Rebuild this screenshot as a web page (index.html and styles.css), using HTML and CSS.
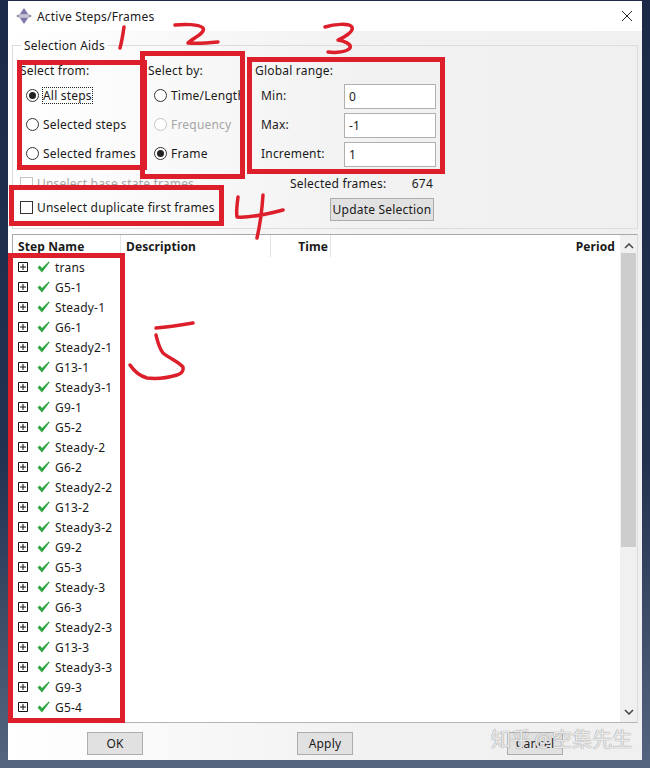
FILE: index.html
```html
<!DOCTYPE html>
<html lang="en">
<head>
    <meta charset="UTF-8">
    <title>Active Steps/Frames</title>
    <link rel="stylesheet" href="styles.css">
</head>
<body>
    <svg class="defs" width="0" height="0">
        <symbol id="plus-box" viewBox="0 0 10 10">
            <path d="M.5.5h9v9H.5z" fill="#fff" stroke="#111"/>
            <path d="M2 5h6M5 2v6" stroke="#111" fill="none"/>
        </symbol>
        <symbol id="tick" viewBox="0 0 13 12">
            <path d="M.5 6.500 2.700 4.500 5 7 11.800.5 12.700 1.300 5 11.500z" fill="#2fa544"/>
        </symbol>
    </svg>

    <div class="dialog">
        <div class="titlebar">
            <svg class="app-icon" width="16" height="16" viewBox="0 0 16 16">
                <path d="M8 0 12.500 6.500h-9z" fill="#7f78a8"/>
                <path d="M8 16 3.500 9.500h9z" fill="#7f78a8"/>
                <path d="M0 8 3.500 6v4zM16 8l-3.500-2v4z" fill="#8f8f98"/>
                <path d="M3.500 7h9v2h-9z" fill="#c3c0d2"/>
            </svg>
            <span class="title">Active Steps/Frames</span>
            <svg class="close" width="12" height="12" viewBox="0 0 12 12">
                <path d="M1 1l10 10M11 1 1 11" stroke="#222" fill="none"/>
            </svg>
        </div>

        <div class="content">
            <fieldset class="aids">
                <legend>Selection Aids</legend>
                <div class="aids-cols">
                    <div class="col col-from">
                        <div class="col-title">Select from:</div>
                        <label class="radio-row"><span class="radio on"></span><span class="focus">All steps</span></label>
                        <label class="radio-row"><span class="radio"></span>Selected steps</label>
                        <label class="radio-row"><span class="radio"></span>Selected frames</label>
                    </div>
                    <div class="col col-by">
                        <div class="col-title">Select by:</div>
                        <label class="radio-row"><span class="radio"></span>Time/Length</label>
                        <label class="radio-row disabled"><span class="radio"></span>Frequency</label>
                        <label class="radio-row"><span class="radio on"></span>Frame</label>
                    </div>
                    <div class="col col-range">
                        <div class="col-title">Global range:</div>
                        <div class="range-row"><span>Min:</span><div class="field">0</div></div>
                        <div class="range-row"><span>Max:</span><div class="field">-1</div></div>
                        <div class="range-row"><span>Increment:</span><div class="field">1</div></div>
                    </div>
                </div>
                <div class="aids-bottom">
                    <div class="checks">
                        <label class="check-row disabled"><span class="check"></span>Unselect base state frames</label>
                        <label class="check-row"><span class="check"></span>Unselect duplicate first frames</label>
                    </div>
                    <div class="selected">
                        <div class="selected-count"><span>Selected frames:</span><span>674</span></div>
                        <button class="btn btn-update">Update Selection</button>
                    </div>
                </div>
            </fieldset>

            <div class="steps">
                <div class="steps-head">
                    <div class="th th-name">Step Name</div>
                    <div class="th th-desc">Description</div>
                    <div class="th th-time">Time</div>
                    <div class="th th-period">Period</div>
                </div>
                <ul class="step-list">
                    <li><svg class="plus"><use href="#plus-box"/></svg><svg class="tick"><use href="#tick"/></svg>trans</li>
                    <li><svg class="plus"><use href="#plus-box"/></svg><svg class="tick"><use href="#tick"/></svg>G5-1</li>
                    <li><svg class="plus"><use href="#plus-box"/></svg><svg class="tick"><use href="#tick"/></svg>Steady-1</li>
                    <li><svg class="plus"><use href="#plus-box"/></svg><svg class="tick"><use href="#tick"/></svg>G6-1</li>
                    <li><svg class="plus"><use href="#plus-box"/></svg><svg class="tick"><use href="#tick"/></svg>Steady2-1</li>
                    <li><svg class="plus"><use href="#plus-box"/></svg><svg class="tick"><use href="#tick"/></svg>G13-1</li>
                    <li><svg class="plus"><use href="#plus-box"/></svg><svg class="tick"><use href="#tick"/></svg>Steady3-1</li>
                    <li><svg class="plus"><use href="#plus-box"/></svg><svg class="tick"><use href="#tick"/></svg>G9-1</li>
                    <li><svg class="plus"><use href="#plus-box"/></svg><svg class="tick"><use href="#tick"/></svg>G5-2</li>
                    <li><svg class="plus"><use href="#plus-box"/></svg><svg class="tick"><use href="#tick"/></svg>Steady-2</li>
                    <li><svg class="plus"><use href="#plus-box"/></svg><svg class="tick"><use href="#tick"/></svg>G6-2</li>
                    <li><svg class="plus"><use href="#plus-box"/></svg><svg class="tick"><use href="#tick"/></svg>Steady2-2</li>
                    <li><svg class="plus"><use href="#plus-box"/></svg><svg class="tick"><use href="#tick"/></svg>G13-2</li>
                    <li><svg class="plus"><use href="#plus-box"/></svg><svg class="tick"><use href="#tick"/></svg>Steady3-2</li>
                    <li><svg class="plus"><use href="#plus-box"/></svg><svg class="tick"><use href="#tick"/></svg>G9-2</li>
                    <li><svg class="plus"><use href="#plus-box"/></svg><svg class="tick"><use href="#tick"/></svg>G5-3</li>
                    <li><svg class="plus"><use href="#plus-box"/></svg><svg class="tick"><use href="#tick"/></svg>Steady-3</li>
                    <li><svg class="plus"><use href="#plus-box"/></svg><svg class="tick"><use href="#tick"/></svg>G6-3</li>
                    <li><svg class="plus"><use href="#plus-box"/></svg><svg class="tick"><use href="#tick"/></svg>Steady2-3</li>
                    <li><svg class="plus"><use href="#plus-box"/></svg><svg class="tick"><use href="#tick"/></svg>G13-3</li>
                    <li><svg class="plus"><use href="#plus-box"/></svg><svg class="tick"><use href="#tick"/></svg>Steady3-3</li>
                    <li><svg class="plus"><use href="#plus-box"/></svg><svg class="tick"><use href="#tick"/></svg>G9-3</li>
                    <li><svg class="plus"><use href="#plus-box"/></svg><svg class="tick"><use href="#tick"/></svg>G5-4</li>
                </ul>
                <div class="scrollbar">
                    <svg class="arrow" width="10" height="6" viewBox="0 0 10 6"><path d="M1 5l4-4 4 4" fill="none" stroke="#444" stroke-width="1.500"/></svg>
                    <div class="scroll-track"><div class="scroll-thumb"></div></div>
                    <svg class="arrow" width="10" height="6" viewBox="0 0 10 6"><path d="M1 1l4 4 4-4" fill="none" stroke="#444" stroke-width="1.500"/></svg>
                </div>
            </div>

            <div class="actions">
                <button class="btn">OK</button>
                <button class="btn">Apply</button>
                <button class="btn">Cancel</button>
            </div>
        </div>
    </div>

    <!-- red markup drawn over the screenshot -->
    <div class="mark mark-1"></div>
    <div class="mark mark-2"></div>
    <div class="mark mark-3"></div>
    <div class="mark mark-4"></div>
    <div class="mark mark-5"></div>
    <svg class="scribbles" width="650" height="768" viewBox="0 0 650 768">
        <g fill="none" stroke="#dc1f2b" stroke-width="3.500" stroke-linecap="round" stroke-linejoin="round">
            <path d="M124 27c-1 7-2 14-4 21"/>
            <path d="M175 25c9-1 24-1 28 3 3 5-10 10-15 15 10 1 20 0 30-1"/>
            <path d="M325 27c9-3 24-4 27 0 2 5-8 10-14 13 6 1 14 4 12 8-3 4-14 5-22 4"/>
            <path d="M238 197c-1 8-2 15-1 20 14 1 31-3 46-7M263 195c-1 15-3 30-6 43"/>
            <path d="M156 328c12-1 25-3 37-5M156 335c2 8 3 13 7 18 6 5 16 9 20 14 1 4-2 7-6 8-10 3-22 4-30 3-7-2-13-7-17-13"/>
        </g>
    </svg>

    <div class="watermark">知乎 @空集先生</div>
</body>
</html>
```

FILE: styles.css
```css
* {
    box-sizing: border-box;
}
body {
    margin: 0;
    width: 650px;
    height: 768px;
    overflow: hidden;
    position: relative;
    padding: 1px 8px 8px;
    background: linear-gradient(#1b2a46 0%, #22324f 60%, #56657f 100%);
    font-family: "Noto Sans", "Noto Sans CJK SC", sans-serif;
    font-size: 12px;
    letter-spacing: 0.2px;
    color: #1a1a1a;
}
.defs {
    position: absolute;
}
.dialog {
    height: 759px;
    display: flex;
    flex-direction: column;
    background: linear-gradient(90deg, #fff 0%, #f2f2f2 55%, #f0f0f0 100%);
}
.titlebar {
    height: 30px;
    flex: none;
    display: flex;
    align-items: center;
    background-color: #fff;
    padding: 0 9px 0 8px;
}
.title {
    margin-left: 5px;
    flex: 1;
}
.content {
    flex: 1;
    display: flex;
    flex-direction: column;
    padding: 0 4px;
}
.aids {
    margin: 4px 0 0;
    padding: 0 0 0 7px;
    height: 194px;
    border: 1px solid #dcdcdc;
    min-width: 0;
}
.aids legend {
    padding: 0 3px;
    margin-left: 1px;
    line-height: 21px;
}
.aids-cols {
    display: flex;
    margin-top: 4px;
}
.col-title {
    line-height: 18px;
    height: 21px;
    padding-top: 2px;
}
.col-from {
    width: 128px;
}
.col-by {
    width: 107px;
}
.col-range {
    width: 190px;
}
.radio-row {
    display: flex;
    align-items: center;
    height: 29px;
    padding-left: 6px;
}
.radio {
    width: 13px;
    height: 13px;
    border: 1px solid #333;
    border-radius: 50%;
    background-color: #fff;
    margin-right: 4px;
    flex: none;
    display: flex;
    align-items: center;
    justify-content: center;
}
.radio.on::after {
    content: "";
    width: 7px;
    height: 7px;
    border-radius: 50%;
    background-color: #222;
}
.focus {
    outline: 1px dotted #222;
    line-height: 15px;
}
.disabled {
    color: #a6a6a6;
}
.disabled .radio, .disabled .check {
    border-color: #c4c4c4;
}
.range-row {
    display: flex;
    align-items: center;
    height: 29px;
    padding-left: 6px;
}
.range-row span {
    width: 83px;
}
.field {
    width: 92px;
    height: 25px;
    margin-top: 2px;
    line-height: 23px;
    padding-left: 4px;
    background-color: #fff;
    border: 1px solid #b0b0b0;
}
.aids-bottom {
    display: flex;
    margin-top: 7px;
}
.checks {
    width: 274px;
    margin-left: -4px;
}
.check-row {
    display: flex;
    align-items: center;
    height: 25px;
    margin-top: 4px;
    padding-left: 4px;
}
.check-row.disabled {
    height: 16px;
    margin-top: 0;
    overflow: hidden;
}
.check {
    width: 13px;
    height: 13px;
    background-color: #fff;
    border: 1px solid #333;
    margin-right: 4px;
    flex: none;
}
.check-row.disabled .check {
    background: none;
}
.selected {
    width: 143px;
}
.selected-count {
    display: flex;
    justify-content: space-between;
    line-height: 18px;
}
.btn-update {
    display: block;
    margin: 5px 0 0 40px;
    width: 104px;
    height: 23px;
}
.btn {
    font-family: inherit;
    font-size: 12px;
    letter-spacing: inherit;
    color: #1a1a1a;
    background-color: #e1e1e1;
    border: 1px solid #adadad;
    padding: 0;
}
.steps {
    margin-top: 5px;
    height: 489px;
    display: grid;
    grid-template-columns: 1fr 17px;
    grid-template-rows: 22px 1fr;
    background-color: #fff;
    border: 1px solid #a9a9a9;
    border-right-color: #dcdcdc;
    border-bottom-color: #b5b5b5;
}
.steps-head {
    display: flex;
    font-weight: bold;
    letter-spacing: 0.1px;
    line-height: 23px;
}
.th {
    border-right: 1px solid #e3e3e3;
    padding: 0 5px;
}
.th-name {
    width: 108px;
}
.th-desc {
    width: 150px;
}
.th-time {
    width: 60px;
    text-align: right;
    padding-right: 2px;
}
.th-period {
    flex: 1;
    text-align: right;
    border-right: 0;
    padding-right: 5px;
}
.step-list {
    grid-column: 1;
    grid-row: 2;
    list-style: none;
    margin: 0;
    padding: 0 0 0 5px;
}
.step-list li {
    display: flex;
    align-items: center;
    height: 20px;
}
.plus {
    width: 10px;
    height: 10px;
    margin-top: -1px;
}
.tick {
    width: 13px;
    height: 12px;
    margin: 0 5px 0 9px;
}
.scrollbar {
    grid-column: 2;
    grid-row: 1 / 3;
    background-color: #f0f0f0;
    display: flex;
    flex-direction: column;
    align-items: center;
    padding: 8px 0 7px;
}
.arrow {
    flex: none;
}
.scroll-track {
    flex: 1;
    width: 100%;
    padding: 2px 1px 0;
    margin: 2px 0 6px;
}
.scroll-thumb {
    height: 294px;
    background-color: #cdcdcd;
}
.actions {
    display: flex;
    padding: 9px 0 0 75px;
    gap: 154px;
}
.actions .btn {
    width: 56px;
    height: 23px;
}
.mark {
    position: absolute;
    border: 5px solid #dc1f2b;
}
.mark-1 { left: 17px; top: 60px; width: 130px; height: 110px; }
.mark-2 { left: 140px; top: 51px; width: 105px; height: 128px; }
.mark-3 { left: 247px; top: 57px; width: 198px; height: 117px; }
.mark-4 { left: 9px; top: 185px; width: 215px; height: 41px; }
.mark-5 { left: 8px; top: 253px; width: 117px; height: 470px; }
.scribbles {
    position: absolute;
    left: 0;
    top: 0;
}
.watermark {
    position: absolute;
    left: 491px;
    top: 726px;
    font-size: 20px;
    line-height: 28px;
    letter-spacing: 0;
    word-spacing: -2px;
    white-space: nowrap;
    color: rgba(255, 255, 255, 0.8);
    text-shadow: 0 0 1px #999, 0 0 1px #999;
}
```
